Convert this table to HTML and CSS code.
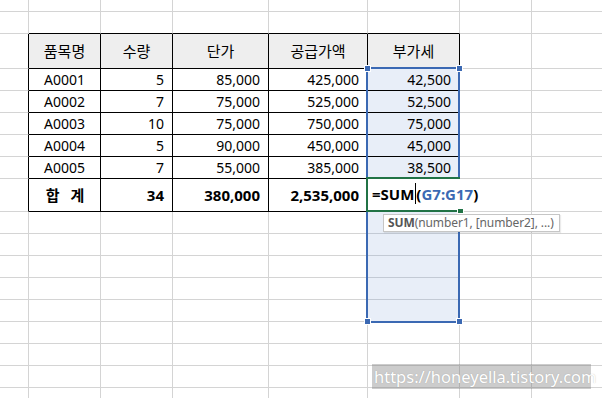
FILE: index.html
```html
<!DOCTYPE html>
<html lang="ko">
<head>
<meta charset="utf-8">
<title>Sheet</title>
<link rel="stylesheet" href="styles.css">
</head>
<body>
<div class="sheet">
  <div class="grid">
    <!-- r0 -->
    <div class="c"></div><div class="c"></div><div class="c"></div><div class="c"></div><div class="c"></div><div class="c"></div><div class="c"></div><div class="c"></div>
    <!-- r1 -->
    <div class="c"></div><div class="c tt"></div><div class="c tt"></div><div class="c tt"></div><div class="c tt"></div><div class="c tt"></div><div class="c"></div><div class="c"></div>
    <!-- r2 header -->
    <div class="c tl"></div>
    <div class="c t h ctr">품목명</div>
    <div class="c t h ctr">수량</div>
    <div class="c t h ctr">단가</div>
    <div class="c t h ctr">공급가액</div>
    <div class="c t h ctr">부가세</div>
    <div class="c"></div><div class="c"></div>
    <!-- r3 -->
    <div class="c tl"></div>
    <div class="c t ctr">A0001</div>
    <div class="c t r">5</div>
    <div class="c t r">85,000</div>
    <div class="c t r">425,000</div>
    <div class="c t r sel">42,500</div>
    <div class="c"></div><div class="c"></div>
    <!-- r4 -->
    <div class="c tl"></div>
    <div class="c t ctr">A0002</div>
    <div class="c t r">7</div>
    <div class="c t r">75,000</div>
    <div class="c t r">525,000</div>
    <div class="c t r sel">52,500</div>
    <div class="c"></div><div class="c"></div>
    <!-- r5 -->
    <div class="c tl"></div>
    <div class="c t ctr">A0003</div>
    <div class="c t r">10</div>
    <div class="c t r">75,000</div>
    <div class="c t r">750,000</div>
    <div class="c t r sel">75,000</div>
    <div class="c"></div><div class="c"></div>
    <!-- r6 -->
    <div class="c tl"></div>
    <div class="c t ctr">A0004</div>
    <div class="c t r">5</div>
    <div class="c t r">90,000</div>
    <div class="c t r">450,000</div>
    <div class="c t r sel">45,000</div>
    <div class="c"></div><div class="c"></div>
    <!-- r7 -->
    <div class="c tl"></div>
    <div class="c t ctr">A0005</div>
    <div class="c t r">7</div>
    <div class="c t r">55,000</div>
    <div class="c t r">385,000</div>
    <div class="c t r sel">38,500</div>
    <div class="c"></div><div class="c"></div>
    <!-- r8 total -->
    <div class="c tl"></div>
    <div class="c t ctr b ko"><span class="sp">합 계</span></div>
    <div class="c t r b">34</div>
    <div class="c t r b">380,000</div>
    <div class="c t r b">2,535,000</div>
    <div class="c t"></div>
    <div class="c"></div><div class="c"></div>
    <!-- r9 -->
    <div class="c"></div><div class="c"></div><div class="c"></div><div class="c"></div><div class="c"></div><div class="c seli"></div><div class="c"></div><div class="c"></div>
    <!-- r10 -->
    <div class="c"></div><div class="c"></div><div class="c"></div><div class="c"></div><div class="c"></div><div class="c seli"></div><div class="c"></div><div class="c"></div>
    <!-- r11 -->
    <div class="c"></div><div class="c"></div><div class="c"></div><div class="c"></div><div class="c"></div><div class="c seli"></div><div class="c"></div><div class="c"></div>
    <!-- r12 -->
    <div class="c"></div><div class="c"></div><div class="c"></div><div class="c"></div><div class="c"></div><div class="c seli"></div><div class="c"></div><div class="c"></div>
    <!-- r13 -->
    <div class="c"></div><div class="c"></div><div class="c"></div><div class="c"></div><div class="c"></div><div class="c seli"></div><div class="c"></div><div class="c"></div>
    <!-- r14 -->
    <div class="c"></div><div class="c"></div><div class="c"></div><div class="c"></div><div class="c"></div><div class="c"></div><div class="c"></div><div class="c"></div>
    <!-- r15 -->
    <div class="c"></div><div class="c"></div><div class="c"></div><div class="c"></div><div class="c"></div><div class="c"></div><div class="c"></div><div class="c"></div>
    <!-- r16 -->
    <div class="c"></div><div class="c"></div><div class="c"></div><div class="c"></div><div class="c"></div><div class="c"></div><div class="c"></div><div class="c"></div>
    <!-- r17 -->
    <div class="c"></div><div class="c"></div><div class="c"></div><div class="c"></div><div class="c"></div><div class="c"></div><div class="c"></div><div class="c"></div>
  </div>

  <div class="range"></div>
  <div class="handle h-tl"></div>
  <div class="handle h-tr"></div>
  <div class="handle h-bl"></div>
  <div class="handle h-br"></div>

  <div class="active">
    <span class="fx">=SUM<span class="caret"></span>(<span class="ref">G7:G17</span>)</span>
    <span class="fill"></span>
  </div>

  <div class="tip"><b>SUM</b>(number1, [number2], ...)</div>

  <div class="mark">https://honeyella.tistory.com</div>
</div>
</body>
</html>
```
FILE: styles.css
```css
html, body {
  margin: 0;
  padding: 0;
  background: #ffffff;
  overflow: hidden;
}
body {
  width: 602px;
  height: 398px;
  font-family: "Noto Sans", "Noto Sans CJK KR", sans-serif;
  font-size: 14px;
  color: #000;
}
.sheet {
  position: relative;
  width: 602px;
  height: 398px;
  overflow: hidden;
}
.grid {
  display: grid;
  grid-template-columns: 29px 72px 72px 96px 99px 92px 72px 72px;
  grid-template-rows: 12px 22px 35px repeat(5, 22px) 33px repeat(9, 22px);
}
.c {
  box-sizing: border-box;
  border-right: 1px solid #d4d4d4;
  border-bottom: 1px solid #d4d4d4;
  display: flex;
  align-items: center;
  white-space: nowrap;
  line-height: 1;
}
.tt { border-bottom-color: #000; }
.tl { border-right-color: #000; }
.t {
  border-right-color: #000;
  border-bottom-color: #000;
}
.h {
  background: #eeeeee;
  font-size: 15px;
  padding-top: 1px;
}
.ctr { justify-content: center; }
.r { justify-content: flex-end; padding-right: 8px; }
.b { font-weight: 700; font-size: 15px; }
.ko { font-size: 15px; }
.sp { word-spacing: 7px; padding-left: 1px; }
.sel { background: #e8eef8; }
.seli {
  background: #e8eef8;
  border-bottom-color: #c3cad5;
}

/* formula range highlight */
.range {
  position: absolute;
  left: 366px;
  top: 67px;
  width: 94px;
  height: 256px;
  box-sizing: border-box;
  border: 2px solid #3b69b3;
}
.handle {
  position: absolute;
  width: 7px;
  height: 7px;
  box-sizing: border-box;
  background: #3b69b3;
  border: 1px solid #ffffff;
}
.h-tl { left: 364px; top: 65px; }
.h-tr { left: 456px; top: 65px; }
.h-bl { left: 364px; top: 318px; }
.h-br { left: 456px; top: 318px; }

/* active editing cell */
.active {
  position: absolute;
  left: 366px;
  top: 177px;
  width: 94px;
  height: 35px;
  box-sizing: border-box;
  background: #ffffff;
  border-left: 2px solid #217346;
  border-top: 2px solid #217346;
  border-bottom: 2px solid #217346;
  display: flex;
  align-items: center;
  padding-left: 4px;
  white-space: nowrap;
  font-weight: 700;
  font-size: 15px;
  line-height: 1;
}
.fx { position: relative; top: 1px; }
.caret {
  display: inline-block;
  width: 1px;
  height: 21px;
  background: #000;
  vertical-align: middle;
  margin: -4px 0 0 1px;
}
.ref { color: #3b69b3; }
.fill {
  position: absolute;
  right: -4px;
  bottom: -4px;
  width: 7px;
  height: 6px;
  box-sizing: border-box;
  background: #217346;
  border: 1px solid #ffffff;
}

/* function tooltip */
.tip {
  position: absolute;
  left: 383px;
  top: 214px;
  width: 177px;
  height: 18px;
  box-sizing: border-box;
  background: #ffffff;
  border: 1px solid #c6c6c6;
  box-shadow: 1px 1px 1px rgba(0, 0, 0, 0.08);
  font-size: 12px;
  line-height: 16px;
  color: #666666;
  padding-left: 4px;
  white-space: nowrap;
  letter-spacing: -0.1px;
}
.tip b { color: #555555; font-weight: 700; }

/* watermark */
.mark {
  position: absolute;
  left: 372px;
  top: 364px;
  width: 219px;
  height: 25px;
  box-sizing: border-box;
  background: rgba(120, 120, 120, 0.38);
  color: #ffffff;
  font-size: 16.5px;
  line-height: 25px;
  padding-left: 2px;
  white-space: nowrap;
  text-shadow: 0 0 1px rgba(90, 90, 90, 0.4);
}
```
